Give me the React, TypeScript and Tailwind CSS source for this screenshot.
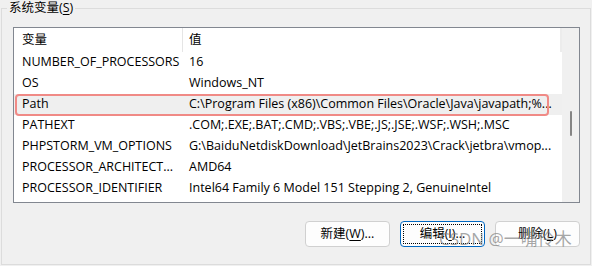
import React from 'react'

interface EnvVar {
  name: string
  value: string
  marked?: boolean
}

const VARS: EnvVar[] = [
  { name: 'NUMBER_OF_PROCESSORS', value: '16' },
  { name: 'OS', value: 'Windows_NT' },
  { name: 'Path', value: 'C:\\Program Files (x86)\\Common Files\\Oracle\\Java\\javapath;%...', marked: true },
  { name: 'PATHEXT', value: '.COM;.EXE;.BAT;.CMD;.VBS;.VBE;.JS;.JSE;.WSF;.WSH;.MSC' },
  { name: 'PHPSTORM_VM_OPTIONS', value: 'G:\\BaiduNetdiskDownload\\JetBrains2023\\Crack\\jetbra\\vmop...' },
  { name: 'PROCESSOR_ARCHITECT...', value: 'AMD64' },
  { name: 'PROCESSOR_IDENTIFIER', value: 'Intel64 Family 6 Model 151 Stepping 2, GenuineIntel' },
]

function Row({ item }: { item: EnvVar }) {
  return (
    <div className={`relative flex h-[21px] items-center whitespace-nowrap ${item.marked ? 'bg-[#efefef]' : ''}`}>
      <div className="w-[169px] shrink-0 pl-[8px]">{item.name}</div>
      <div className="pl-[6px]">{item.value}</div>
      {item.marked && (
        // red annotation box drawn over the row
        <div className="pointer-events-none absolute left-[1px] top-0 h-[22px] w-[534px] rounded-[4px] border-2 border-[#f08a86]"></div>
      )}
    </div>
  )
}

function WinButton({ label, mnemonic, suffix, focused }: { label: string; mnemonic: string; suffix: string; focused?: boolean }) {
  return (
    <button
      className={`relative flex h-[26px] w-[85px] items-center justify-center rounded-[4px] bg-[#fdfdfd] text-[12.5px] ${
        focused ? 'border border-[#0067c0]' : 'border border-[#d0d0d0]'
      }`}
    >
      {focused && <span className="absolute inset-[2px] border border-dotted border-black"></span>}
      <span>
        {label}(<span className="underline underline-offset-2">{mnemonic}</span>){suffix}
      </span>
    </button>
  )
}

export default function App() {
  return (
    <div
      className="relative h-[266px] w-[592px] overflow-hidden bg-[#f0f0f0] text-[12.5px] text-black"
      style={{ fontFamily: '"Open Sans", "Noto Sans CJK SC", sans-serif' }}
    >
      <fieldset className="ml-[1px] h-[265px] w-[590px] border border-[#dcdcdc]">
        <legend className="ml-[5px] px-[2px] leading-[16px]">
          系统变量(<span className="underline underline-offset-2">S</span>)
        </legend>

        {/* list view */}
        <div className="ml-[11px] mt-[11px] flex h-[176px] w-[567px] border border-[#828790] bg-white">
          <div className="flex-1">
            <div className="relative flex h-[24px] items-center">
              <div className="h-full w-[169px] shrink-0 border-r border-[#e5e5e5] pl-[8px] leading-[24px]">变量</div>
              <div className="pl-[6px]">值</div>
              <div className="absolute right-0 top-0 h-full w-[2px] bg-[#ececec]"></div>
            </div>
            {VARS.map((v) => (
              <Row key={v.name} item={v} />
            ))}
          </div>
          {/* scrollbar */}
          <div className="flex w-[17px] shrink-0 justify-center bg-[#f0f0f0] pt-[83px]">
            <div className="h-[25px] w-[2px] rounded-full bg-[#858585]"></div>
          </div>
        </div>

        <div className="mr-[10px] mt-[18px] flex justify-end gap-[10px]">
          <WinButton label="新建" mnemonic="W" suffix="..." />
          <WinButton label="编辑" mnemonic="I" suffix="..." focused />
          <WinButton label="删除" mnemonic="L" suffix="" />
        </div>
      </fieldset>

      {/* watermark */}
      <div className="pointer-events-none absolute left-[439px] top-[228px] text-[17px] leading-[22px] text-[#7f7f7f]/70">
        CSDN @一嘴伶木
      </div>
    </div>
  )
}
